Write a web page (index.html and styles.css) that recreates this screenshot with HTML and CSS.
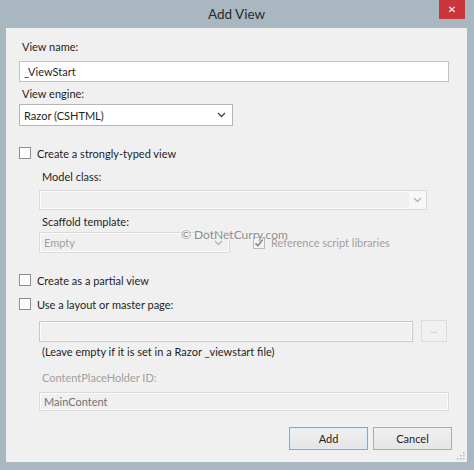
FILE: index.html
```html
<!DOCTYPE html>
<html lang="en">
<head>
  <meta charset="UTF-8" />
  <title>Add View</title>
  <link rel="stylesheet" href="styles.css">
</head>
<body>
  <div class="window">
    <div class="titlebar">
      <span class="title">Add View</span>
      <button class="close-btn">&#x2715;</button>
    </div>

    <div class="client">
      <div class="label lbl-name">View name:</div>
      <div class="textbox tb-name"><span class="caret">_</span>ViewStart</div>

      <div class="label lbl-engine">View engine:</div>
      <div class="combo combo-engine">
        <span>Razor (CSHTML)</span>
        <svg class="chevron" width="9" height="6" viewBox="0 0 9 6"><path d="M1 1l3.5 3.5L8 1" fill="none" stroke="#444" stroke-width="1.3"/></svg>
      </div>

      <label class="check row-typed"><span class="box"></span>Create a strongly-typed view</label>

      <div class="indent">
        <div class="label lbl-model">Model class:</div>
        <div class="combo disabled combo-model">
          <span></span>
          <span class="drop"><svg class="chevron" width="9" height="6" viewBox="0 0 9 6"><path d="M1 1l3.5 3.5L8 1" fill="none" stroke="#b4b4b4" stroke-width="1.3"/></svg></span>
        </div>

        <div class="label lbl-scaffold">Scaffold template:</div>
        <div class="scaffold-row">
          <div class="combo disabled combo-scaffold">
            <span class="gray">Empty</span>
            <svg class="chevron" width="9" height="6" viewBox="0 0 9 6"><path d="M1 1l3.5 3.5L8 1" fill="none" stroke="#b4b4b4" stroke-width="1.3"/></svg>
          </div>
          <label class="check disabled-check"><span class="box checked"><svg width="10" height="10" viewBox="0 0 10 10"><path d="M1.5 5.2l2.4 2.6L8.6 1.6" fill="none" stroke="#8a8a8a" stroke-width="1.6"/></svg></span>Reference script libraries</label>
        </div>
      </div>

      <label class="check row-partial"><span class="box"></span>Create as a partial view</label>
      <label class="check row-layout"><span class="box"></span>Use a layout or master page:</label>

      <div class="indent">
        <div class="layout-row">
          <div class="textbox disabled tb-layout"></div>
          <button class="browse-btn">...</button>
        </div>
        <div class="label hint">(Leave empty if it is set in a Razor _viewstart file)</div>
        <div class="label gray lbl-cph">ContentPlaceHolder ID:</div>
        <div class="textbox disabled tb-cph">MainContent</div>
      </div>

      <div class="buttons">
        <button class="btn btn-default">Add</button>
        <button class="btn">Cancel</button>
      </div>

      <div class="watermark">&copy; DotNetCurry.com</div>

      <svg class="grip" width="8" height="8" viewBox="0 0 8 8">
        <rect x="6" y="0" width="1.5" height="1.5" fill="#b8b8b8"/>
        <rect x="3" y="3" width="1.5" height="1.5" fill="#b8b8b8"/>
        <rect x="6" y="3" width="1.5" height="1.5" fill="#b8b8b8"/>
        <rect x="0" y="6" width="1.5" height="1.5" fill="#b8b8b8"/>
        <rect x="3" y="6" width="1.5" height="1.5" fill="#b8b8b8"/>
        <rect x="6" y="6" width="1.5" height="1.5" fill="#b8b8b8"/>
      </svg>
    </div>
  </div>
</body>
</html>
```

FILE: styles.css
```css
body {
  margin: 0;
  font-family: Lato, 'Noto Sans', sans-serif;
  font-size: 11px;
  color: #1e1e1e;
}
.window {
  width: 474px;
  height: 470px;
  background: #a9b7c1;
  box-sizing: border-box;
  padding: 0 7px 0 6px;
}
.titlebar {
  position: relative;
  height: 28px;
  display: flex;
  align-items: center;
  justify-content: center;
}
.title {
  font-size: 13.5px;
  color: #2b2b2b;
  margin-top: -1px;
}
.close-btn {
  position: absolute;
  right: 2px;
  top: 0;
  width: 26px;
  height: 19px;
  border: none;
  padding: 0;
  background: #c9363b;
  color: #fff;
  font-size: 10px;
  font-weight: bold;
  font-family: 'DejaVu Sans', sans-serif;
}
.client {
  position: relative;
  height: 434px;
  background: #f0f0f0;
  box-sizing: border-box;
  padding: 11px 18px 0 13px;
}
.label {
  height: 16px;
  line-height: 16px;
  padding-left: 3px;
}
.textbox, .combo {
  box-sizing: border-box;
  background: #fff;
  border: 1px solid #c3c3c3;
  padding: 0 4px;
  display: flex;
  align-items: center;
}
.caret {
  margin-right: -1px;
}
.tb-name { margin-top: 6px; height: 21px; }
.lbl-engine { margin-top: 4px; }
.combo {
  justify-content: space-between;
  padding-right: 6px;
}
.combo-engine {
  margin-top: 2px;
  width: 214px;
  height: 22px;
  border-color: #b5b5b5;
}
.check {
  display: flex;
  align-items: center;
  height: 16px;
}
.box {
  width: 12px;
  height: 12px;
  box-sizing: border-box;
  border: 1px solid #8e8f8f;
  background: #fdfdfd;
  margin-right: 6px;
  display: flex;
  align-items: center;
  justify-content: center;
}
.row-typed { margin-top: 19px; }
.indent { margin-left: 20px; }
.lbl-model { margin-top: 8px; }
.disabled {
  background: #f0f0f0;
  border-color: #dadada;
  box-shadow: inset 0 0 0 1px #fbfbfb;
}
.combo-model {
  margin-top: 5px;
  width: 388px;
  height: 20px;
  padding-right: 0;
}
.drop {
  width: 17px;
  height: 18px;
  background: #f7f7f7;
  display: flex;
  align-items: center;
  justify-content: center;
}
.lbl-scaffold { margin-top: 4px; }
.scaffold-row {
  display: flex;
  align-items: center;
  margin-top: 2px;
}
.combo-scaffold {
  width: 191px;
  height: 21px;
}
.gray { color: #a0a0a0; }
.disabled-check {
  margin-left: 23px;
  color: #a0a0a0;
}
.box.checked {
  border-color: #bcbcbc;
  background: #f4f4f4;
}
.row-partial { margin-top: 19px; }
.row-layout { margin-top: 8px; }
.layout-row {
  display: flex;
  align-items: center;
  gap: 8px;
  margin-top: 8px;
}
.tb-layout {
  width: 374px;
  height: 21px;
  border-color: #c8c8c8;
}
.browse-btn {
  width: 26px;
  height: 22px;
  box-sizing: border-box;
  border: 1px solid #dcdcdc;
  background: #f0f0f0;
  color: #b0b0b0;
  font-size: 9px;
  padding: 0 0 4px;
  font-family: inherit;
}
.hint { margin-top: 2px; }
.lbl-cph { margin-top: 10px; }
.tb-cph {
  margin-top: 6px;
  width: 410px;
  height: 19px;
  color: #707070;
}
.buttons {
  display: flex;
  justify-content: flex-end;
  gap: 5px;
  margin-top: 16px;
  margin-right: -3px;
}
.btn {
  width: 79px;
  height: 23px;
  box-sizing: border-box;
  border: 1px solid #acacac;
  background: linear-gradient(#f0f0f0, #e5e5e5);
  font-family: inherit;
  font-size: 11px;
  color: #1e1e1e;
  padding: 0;
}
.btn-default {
  border-color: #6faee8;
  box-shadow: inset 0 0 0 1px #dcecfc;
}
.watermark {
  position: absolute;
  left: 175px;
  top: 199px;
  font-size: 12px;
  color: #8c8c8c;
  text-shadow: 0 0 2px #fff;
  pointer-events: none;
}
.grip {
  position: absolute;
  right: 2px;
  bottom: 2px;
}
```
